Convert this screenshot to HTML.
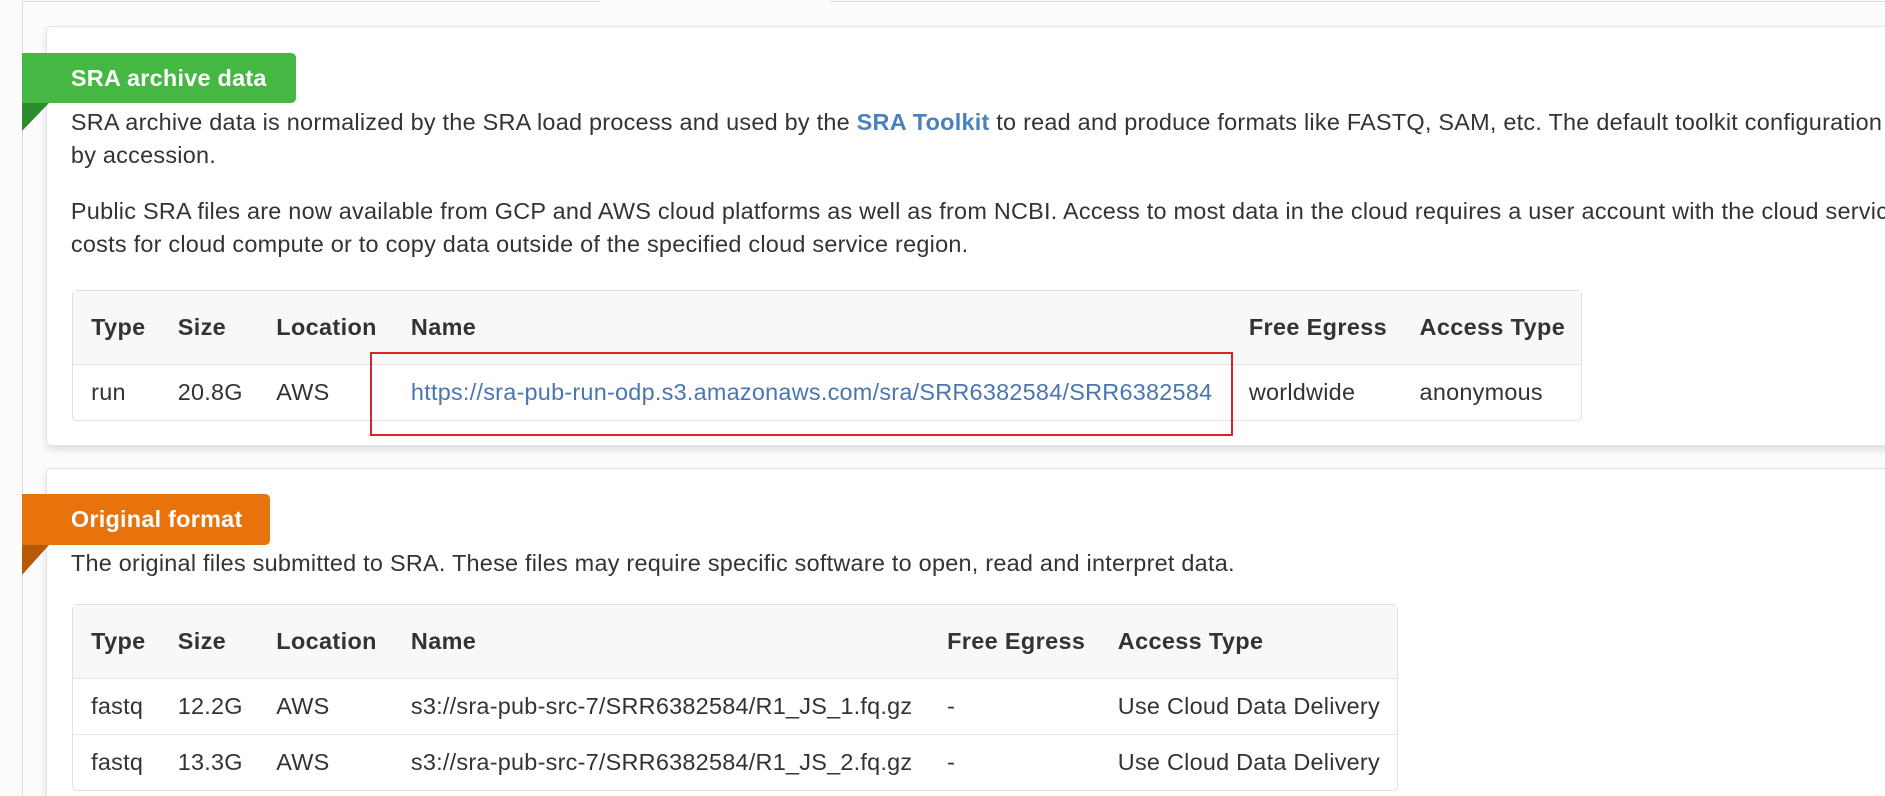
<!DOCTYPE html>
<html><head><style>
html,body{margin:0;padding:0;}
body{width:1885px;height:796px;overflow:hidden;background:#fff;font-family:"Liberation Sans",Arial,sans-serif;color:#333;}
#w{zoom:1.2022;position:relative;width:1568px;height:662px;overflow:hidden;background:#fcfcfc;letter-spacing:0.2px;}
.frame{position:absolute;left:18px;top:1px;width:1600px;height:700px;border-left:1px solid #ddd;border-top:1px solid #ddd;}
.tabgap{position:absolute;left:500px;top:0;width:190px;height:3px;background:#fcfcfc;}
.panel{position:absolute;left:38px;width:1600px;background:#fff;border:1px solid #e3e3e3;border-radius:4px;box-shadow:0 3px 6px rgba(0,0,0,.12);}
.lab{position:absolute;left:18px;height:42px;color:#fff;font-weight:bold;font-size:19.5px;line-height:42px;padding-left:41px;border-radius:0 4px 4px 0;box-sizing:border-box;}
.fold{position:absolute;left:18px;width:0;height:0;border-right:23px solid transparent;}
p{position:absolute;left:59px;margin:0;font-size:19.5px;line-height:28px;width:1700px;white-space:nowrap;}
table{position:absolute;left:60px;border-collapse:separate;border-spacing:0;border:1px solid #e0e0e0;border-radius:4px;font-size:19.5px;table-layout:fixed;}
th{background:#f7f8f9;text-align:left;font-weight:bold;height:61px;padding:0 0 0 15px;border-bottom:1px solid #e3e3e3;white-space:nowrap;letter-spacing:0.3px;}
td{height:46px;padding:0 0 0 15px;white-space:nowrap;border-bottom:1px solid #e8e8e8;}
tr:last-child td{border-bottom:none;}
a{color:#4a76b0;text-decoration:none;}
</style></head><body><div id="w">
<div class="frame"></div><div class="tabgap"></div>
<div class="panel" style="top:22px;height:347px;"></div>
<div class="lab" style="top:44px;width:228px;background:#45b844;">SRA archive data</div>
<div class="fold" style="top:86px;border-top:24px solid #2f8c2c;"></div>
<p style="top:88px;">SRA archive data is normalized by the SRA load process and used by the <a style="font-weight:bold;color:#4a7fc0">SRA Toolkit</a> to read and produce formats like FASTQ, SAM, etc. The default toolkit configuration<br>by accession.</p>
<p style="top:162px;">Public SRA files are now available from GCP and AWS cloud platforms as well as from NCBI. Access to most data in the cloud requires a user account with the cloud service<br>costs for cloud compute or to copy data outside of the specified cloud service region.</p>
<table style="top:241px;width:1256px;">
<tr><th style="width:57px">Type</th><th style="width:67px">Size</th><th style="width:97px">Location</th><th style="width:682px">Name</th><th style="width:127px">Free Egress</th><th>Access Type</th></tr>
<tr><td>run</td><td>20.8G</td><td>AWS</td><td><a>https://sra-pub-run-odp.s3.amazonaws.com/sra/SRR6382584/SRR6382584</a></td><td>worldwide</td><td>anonymous</td></tr>
</table>
<div style="position:absolute;left:308px;top:293px;width:714px;height:66px;border:2px solid #d9232d;"></div>

<div class="panel" style="top:389px;height:400px;"></div>
<div class="lab" style="top:411px;width:207px;background:#e8730c;">Original format</div>
<div class="fold" style="top:453px;border-top:25px solid #b65a08;"></div>
<p style="top:455px;">The original files submitted to SRA. These files may require specific software to open, read and interpret data.</p>
<table style="top:502px;width:1103px;">
<tr><th style="width:57px">Type</th><th style="width:67px">Size</th><th style="width:97px">Location</th><th style="width:431px">Name</th><th style="width:127px">Free Egress</th><th>Access Type</th></tr>
<tr><td>fastq</td><td>12.2G</td><td>AWS</td><td>s3://sra-pub-src-7/SRR6382584/R1_JS_1.fq.gz</td><td>-</td><td>Use Cloud Data Delivery</td></tr>
<tr><td>fastq</td><td>13.3G</td><td>AWS</td><td>s3://sra-pub-src-7/SRR6382584/R1_JS_2.fq.gz</td><td>-</td><td>Use Cloud Data Delivery</td></tr>
</table>
</div></body></html>
